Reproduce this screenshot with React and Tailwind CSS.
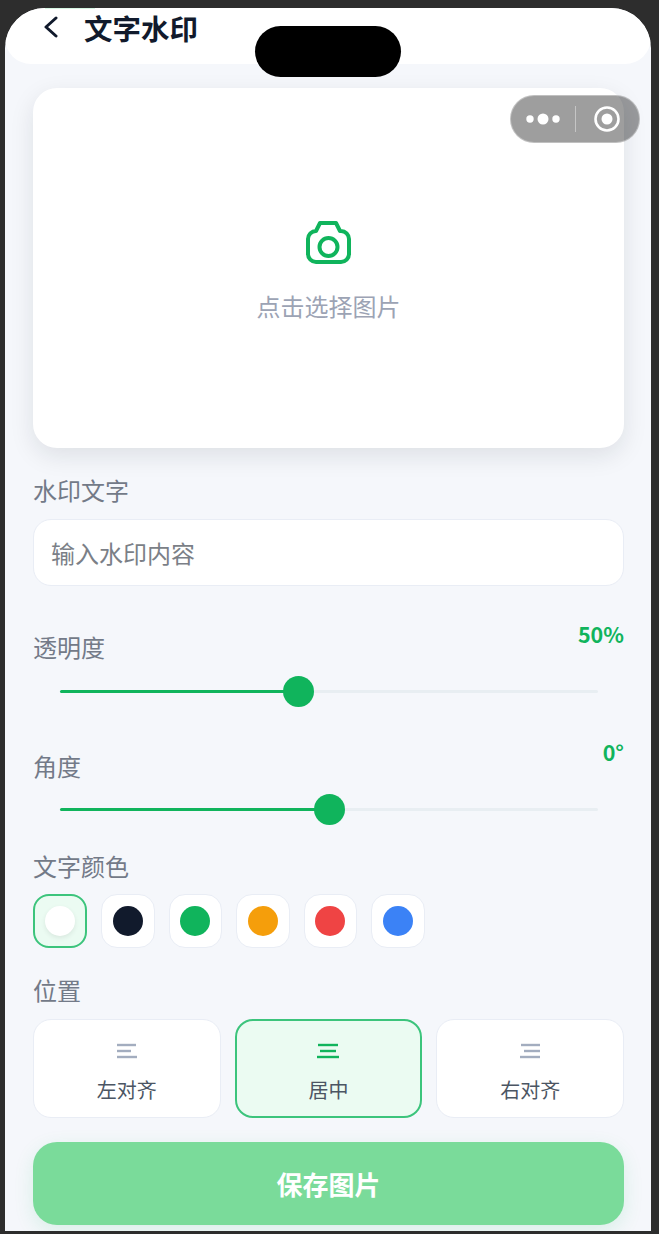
const FONT = "font-['Noto_Sans_CJK_SC','Noto_Sans',sans-serif]";

function Camera() {
  return (
    <svg width="47" height="44" viewBox="0 0 47 44" fill="none" stroke="#10b45c" strokeWidth="4" strokeLinejoin="round" strokeLinecap="round">
      <path d="M11 11 L15 3 H31 L35 11 H36 a8 8 0 0 1 8 8 v15 a8 8 0 0 1-8 8 H11 a8 8 0 0 1-8-8 V19 a8 8 0 0 1 8-8 z" />
      <circle cx="23.5" cy="27" r="9" />
    </svg>
  );
}

function Slider({ label, value, thumb, top, labelClass }) {
  return (
    <div className={top}>
      <div className="flex justify-between items-end h-[43px]">
        <span className={"text-[24px] leading-[32px] text-[#737a88] " + labelClass}>{label}</span>
        <span className="text-[21.5px] leading-[28px] font-bold text-[#10b45c] mb-[17px]">{value}</span>
      </div>
      <div className="relative h-[31px] mt-[11px] ml-[27px] mr-[26px]">
        <div className="absolute left-0 right-0 top-[14px] h-[3px] rounded-full bg-[#e8eef2]" />
        <div className="absolute left-0 top-[14px] h-[3px] rounded-full bg-[#10b45c]" style={{ width: `${thumb}%` }} />
        <div className="absolute top-0 w-[31px] h-[31px] -ml-[15.5px] rounded-full bg-[#10b45c]" style={{ left: `${thumb}%` }} />
      </div>
    </div>
  );
}

function Swatch({ color, active }) {
  return (
    <div
      className={
        active
          ? "w-[54px] h-[54px] rounded-[16px] border-2 border-[#3cc47c] bg-[#ebfbf2] flex items-center justify-center"
          : "w-[53.5px] h-[53.5px] rounded-[16px] border border-[#e9edf5] bg-white flex items-center justify-center"
      }
    >
      <div className={active ? "w-[30px] h-[30px] rounded-full bg-white shadow-[0_2px_5px_rgba(0,0,0,0.08)]" : "w-[30px] h-[30px] rounded-full"} style={active ? undefined : { backgroundColor: color }} />
    </div>
  );
}

function AlignIcon({ lines, color }) {
  return (
    <svg width="24" height="16" viewBox="0 0 24 16" fill="none" stroke={color} strokeWidth="2.4">
      {lines.map(([a, b], i) => (
        <line key={i} x1={a} x2={b} y1={2 + i * 6} y2={2 + i * 6} />
      ))}
    </svg>
  );
}

function Option({ label, lines, active }) {
  return (
    <div
      className={
        "h-[99px] rounded-[18px] flex flex-col items-center " +
        (active ? "border-2 border-[#3cc47c] bg-[#ebfbf2] pt-[22px]" : "border border-[#e9edf5] bg-white pt-[23px]")
      }
    >
      <AlignIcon lines={lines} color={active ? "#10b45c" : "#a3adbf"} />
      <span className="mt-[17px] text-[20px] leading-[28px] text-[#4b5563]">{label}</span>
    </div>
  );
}

export default function App() {
  return (
    <div className={"w-[659px] h-[1234px] overflow-hidden bg-[#2d2d2d] pt-[8px] pl-[5px] " + FONT}>
      <div className="relative w-[646px] h-[1223px] rounded-t-[40px] overflow-hidden bg-[#f5f7fb]">
        <div className="h-[56px] bg-white rounded-b-[26px] flex items-center pl-[36px]">
          <svg width="20" height="24" viewBox="0 0 20 24" fill="none" stroke="#111a2c" strokeWidth="3" strokeLinecap="round" strokeLinejoin="round" className="-mt-[16px]">
            <path d="M15 2 L5 11 L15 20" />
          </svg>
          <span className="ml-[23px] -mt-[16px] text-[28.5px] leading-[36px] font-bold text-[#111a2c]">文字水印</span>
        </div>
        <div className="absolute left-[40px] top-0 w-[50px] h-px bg-[#d5f5e3]" />

        <div className="pl-[28px] pr-[27px]">
          <div className="mt-[24px] h-[360px] rounded-[24px] bg-white shadow-[0_8px_24px_rgba(17,26,44,0.1)] flex flex-col items-center pt-[132px]">
            <Camera />
            <span className="mt-[26px] text-[24px] leading-[32px] text-[#9ca3b4]">点击选择图片</span>
          </div>

          <div className="mt-[26px] text-[24px] leading-[32px] text-[#737a88]">水印文字</div>
          <div className="mt-[13px] h-[67px] rounded-[18px] border border-[#e9edf5] bg-white flex items-center pl-[17px] pt-[1px] text-[24px] text-[#7b7f87]">
            输入水印内容
          </div>

          <Slider label="透明度" value="50%" thumb={44.3} top="mt-[36px]" labelClass="mb-[2px]" />
          <Slider label="角度" value="0°" thumb={50} top="mt-[33px]" labelClass="mb-[1px]" />

          <div className="mt-[25px] text-[24px] leading-[32px] text-[#737a88]">文字颜色</div>
          <div className="mt-[12px] flex items-center gap-[14px]">
            <Swatch active />
            <Swatch color="#111a2c" />
            <Swatch color="#10b45c" />
            <Swatch color="#f59e0b" />
            <Swatch color="#ef4444" />
            <Swatch color="#3b82f6" />
          </div>

          <div className="mt-[26px] text-[24px] leading-[32px] text-[#737a88]">位置</div>
          <div className="mt-[13px] grid grid-cols-3 gap-[14px]">
            <Option label="左对齐" lines={[[2, 21], [2, 16], [2, 22]]} />
            <Option label="居中" lines={[[2, 22], [4, 20], [1, 23]]} active />
            <Option label="右对齐" lines={[[3, 22], [6, 22], [2, 22]]} />
          </div>

          <div className="mt-[24px] h-[83px] rounded-[24px] bg-[#7adb9a] shadow-[0_6px_20px_rgba(16,178,89,0.12)] flex items-center justify-center text-[26px] font-bold text-white">
            保存图片
          </div>
        </div>

        <div className="absolute left-[250px] top-[18px] w-[146px] h-[51px] rounded-full bg-black" />
        <div className="absolute left-[505px] top-[87px] w-[130px] h-[48px] rounded-full bg-[rgba(0,0,0,0.38)] border border-[rgba(255,255,255,0.35)] flex items-center">
          <svg width="34" height="14" viewBox="0 0 34 14" fill="#ffffff" className="ml-[15px]">
            <circle cx="4" cy="7" r="3.7" />
            <circle cx="17" cy="7" r="5.5" />
            <circle cx="30" cy="7" r="3.7" />
          </svg>
          <div className="ml-[15px] w-px h-[26px] bg-[rgba(255,255,255,0.4)]" />
          <svg width="28" height="28" viewBox="0 0 28 28" fill="none" className="ml-[17px]">
            <circle cx="14" cy="14" r="11.5" stroke="#ffffff" strokeWidth="2.6" />
            <circle cx="14" cy="14" r="5.5" fill="#ffffff" />
          </svg>
        </div>
      </div>
    </div>
  );
}
